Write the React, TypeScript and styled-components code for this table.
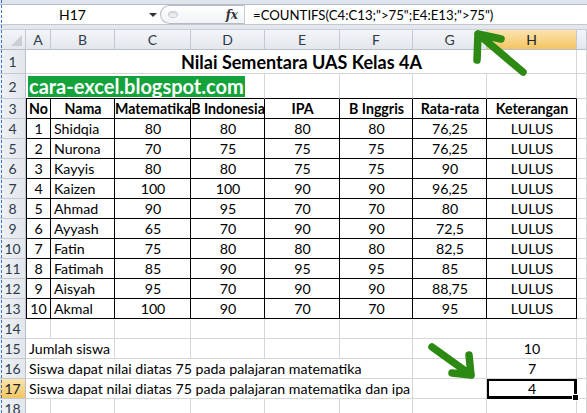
import React from 'react';
import styled, { createGlobalStyle, css } from 'styled-components';

const GlobalStyle = createGlobalStyle`
  html, body { margin: 0; padding: 0; background: #fff; overflow: hidden; }
  body { font-family: Lato, "Liberation Sans", sans-serif; color: #000; }
  * { box-sizing: border-box; }
`;

const Frame = styled.div`
  position: relative;
  width: 587px;
  height: 413px;
  overflow: hidden;
  background: #fff;
  &::before {
    content: '';
    position: absolute;
    left: 1px;
    top: 0;
    bottom: 0;
    border-left: 1px dashed #3d74d0;
    z-index: 6;
  }
`;

const TopStrip = styled.div`
  height: 4px;
  background: #dfe5ed;
`;

const FormulaBar = styled.div`
  display: flex;
  height: 21px;
  background: #fff;
  border-top: 1px solid #b7bec8;
  border-bottom: 1px solid #c3c9d1;
`;

const NameBox = styled.div`
  width: 160px;
  display: flex;
  align-items: center;
`;

const NameText = styled.div`
  flex: 1;
  text-align: center;
  font-size: 14px;
`;

const Caret = styled.div`
  width: 15px;
  display: flex;
  justify-content: center;
  &::after {
    content: '';
    border-left: 4px solid transparent;
    border-right: 4px solid transparent;
    border-top: 4px solid #333;
  }
`;

const FxArea = styled.div`
  width: 85px;
  height: 100%;
  display: flex;
  align-items: center;
  justify-content: space-between;
  padding: 0 6px 0 7px;
  border: 1px solid #b4bbc5;
  border-right-color: #c6ccd4;
  border-radius: 10px 0 0 10px;
  background: linear-gradient(#ffffff, #f1f3f6);
`;

const Dimple = styled.div`
  width: 10px;
  height: 7px;
  border-radius: 50%;
  background: linear-gradient(#d8dce2, #f5f6f8);
  border: 1px solid #c5cad1;
`;

const Fx = styled.span`
  font-family: "DejaVu Serif", "Liberation Serif", serif;
  font-style: italic;
  font-weight: bold;
  font-size: 12px;
  color: #333;
`;

const FormulaText = styled.div`
  flex: 1;
  padding-left: 8px;
  display: flex;
  align-items: center;
  font-size: 13.2px;
  white-space: nowrap;
`;

const GapStrip = styled.div`
  height: 5px;
  background: #e4e8ed;
  border-bottom: 1px solid #c9ced5;
`;

const Sheet = styled.div`
  display: grid;
  grid-template-columns: 26px 25px 64px 76px 74px 75px 73px 74px 90px 1fr;
  grid-template-rows: 20px 24px 25px repeat(16, 20px);
`;

const headActive = css`
  background: linear-gradient(#fbe4b0, #f3c562);
  color: #222;
`;

const ColHead = styled.div<{ $active?: boolean }>`
  display: flex;
  align-items: center;
  justify-content: center;
  font-size: 14px;
  color: #2f3b4a;
  background: linear-gradient(#f3f5f8, #e3e7ec);
  border-right: 1px solid #c4c9d0;
  border-bottom: 1px solid #b8bfc8;
  ${(p) => p.$active && headActive}
`;

const Corner = styled(ColHead)`
  position: relative;
  &::after {
    content: '';
    position: absolute;
    right: 3px;
    bottom: 3px;
    border-left: 11px solid transparent;
    border-bottom: 11px solid #c9ced5;
  }
`;

const RowHead = styled.div<{ $active?: boolean }>`
  display: flex;
  align-items: center;
  justify-content: center;
  font-size: 14px;
  color: #2f3b4a;
  background: linear-gradient(90deg, #eef1f5, #e3e7ec);
  border-right: 1px solid #b8bfc8;
  border-bottom: 1px solid #c4c9d0;
  ${(p) => p.$active && headActive}
`;

type CellProps = {
  $span?: number;
  $align?: 'left' | 'center';
  $bold?: boolean;
  $box?: boolean;
  $boxLeft?: boolean;
  $under?: boolean;
  $selected?: boolean;
  $overflow?: boolean;
};

const Cell = styled.div<CellProps>`
  position: relative;
  grid-column: span ${(p) => p.$span ?? 1};
  display: flex;
  align-items: center;
  justify-content: ${(p) => (p.$align === 'left' ? 'flex-start' : 'center')};
  padding: 0 2px 0 3px;
  font-size: 14.2px;
  font-weight: ${(p) => (p.$bold ? 700 : 400)};
  white-space: nowrap;
  overflow: ${(p) => (p.$overflow ? 'visible' : 'hidden')};
  border-right: 1px solid ${(p) => (p.$box ? '#000' : '#d6d6d6')};
  border-bottom: 1px solid ${(p) => (p.$box || p.$under ? '#000' : '#d6d6d6')};
  ${(p) => p.$boxLeft && css`box-shadow: inset 1px 0 0 #000;`}
  ${(p) =>
    p.$selected &&
    css`
      overflow: visible;
      box-shadow: inset 0 0 0 2px #000;
      border-right-color: #000;
      border-bottom-color: #000;
      &::after {
        content: '';
        position: absolute;
        right: -3px;
        bottom: -3px;
        width: 5px;
        height: 5px;
        background: #000;
        border: 1px solid #fff;
        z-index: 3;
      }
    `}
`;

const Title = styled.span`
  font-size: 18px;
  font-weight: 700;
`;

const Brand = styled.span`
  background: #13a33a;
  color: #fff;
  font-weight: 700;
  font-size: 20px;
  line-height: 21px;
  padding: 0 1px;
  margin-left: -1px;
`;

const Arrows = styled.svg`
  position: absolute;
  left: 0;
  top: 0;
  pointer-events: none;
  z-index: 5;
`;

const COLS = ['A', 'B', 'C', 'D', 'E', 'F', 'G', 'H', ''];
const HEADERS = ['No', 'Nama', 'Matematika', 'B Indonesia', 'IPA', 'B Inggris', 'Rata-rata', 'Keterangan'];
const DATA: (string | number)[][] = [
  [1, 'Shidqia', 80, 80, 80, 80, '76,25'],
  [2, 'Nurona', 70, 75, 75, 75, '76,25'],
  [3, 'Kayyis', 80, 80, 75, 75, '90'],
  [4, 'Kaizen', 100, 100, 90, 90, '96,25'],
  [5, 'Ahmad', 90, 95, 70, 70, '80'],
  [6, 'Ayyash', 65, 70, 90, 90, '72,5'],
  [7, 'Fatin', 75, 80, 80, 80, '82,5'],
  [8, 'Fatimah', 85, 90, 95, 95, '85'],
  [9, 'Aisyah', 95, 70, 90, 90, '88,75'],
  [10, 'Akmal', 100, 90, 70, 70, '95'],
];

const Blank = ({ n }: { n: number }) => (
  <>
    {Array.from({ length: n }).map((_, i) => (
      <Cell key={i} />
    ))}
  </>
);

export default function App() {
  return (
    <Frame>
      <GlobalStyle />
      <TopStrip />
      <FormulaBar>
        <NameBox>
          <NameText>H17</NameText>
          <Caret />
        </NameBox>
        <FxArea>
          <Dimple />
          <Fx>fx</Fx>
        </FxArea>
        <FormulaText>=COUNTIFS(C4:C13;"&gt;75";E4:E13;"&gt;75")</FormulaText>
      </FormulaBar>
      <GapStrip />
      <Sheet>
        <Corner />
        {COLS.map((c, i) => (
          <ColHead key={i} $active={c === 'H'}>
            {c}
          </ColHead>
        ))}

        <RowHead>1</RowHead>
        <Cell $span={8}>
          <Title>Nilai Sementara UAS Kelas 4A</Title>
        </Cell>
        <Cell />

        <RowHead>2</RowHead>
        <Cell $span={4} $align="left" $under $overflow>
          <Brand>cara-excel.blogspot.com</Brand>
        </Cell>
        <Cell $under />
        <Cell $under />
        <Cell $under />
        <Cell $under />
        <Cell />

        <RowHead>3</RowHead>
        {HEADERS.map((h, i) => (
          <Cell key={h} $box $boxLeft={i === 0} $bold>
            {h}
          </Cell>
        ))}
        <Cell />

        {DATA.map((r, ri) => (
          <React.Fragment key={ri}>
            <RowHead>{ri + 4}</RowHead>
            {r.map((v, ci) => (
              <Cell key={ci} $box $boxLeft={ci === 0} $align={ci === 1 ? 'left' : 'center'}>
                {v}
              </Cell>
            ))}
            <Cell $box>LULUS</Cell>
            <Cell />
          </React.Fragment>
        ))}

        <RowHead>14</RowHead>
        <Blank n={9} />

        <RowHead>15</RowHead>
        <Cell $span={2} $align="left">Jumlah siswa</Cell>
        <Blank n={5} />
        <Cell>10</Cell>
        <Cell />

        <RowHead>16</RowHead>
        <Cell $span={6} $align="left">Siswa dapat nilai diatas 75 pada palajaran matematika</Cell>
        <Cell />
        <Cell>7</Cell>
        <Cell />

        <RowHead $active>17</RowHead>
        <Cell $span={6} $align="left" $overflow>Siswa dapat nilai diatas 75 pada palajaran matematika dan ipa</Cell>
        <Cell />
        <Cell $selected>4</Cell>
        <Cell />

        <RowHead>18</RowHead>
        <Blank n={9} />
      </Sheet>
      <Arrows width="587" height="413" viewBox="0 0 587 413">
        <g stroke="#2c8a13" strokeWidth="7.5" strokeLinecap="round" strokeLinejoin="round" fill="none">
          <path d="M523 72 L478 34 M478 34 L501 39 M478 34 L477 60" />
          <path d="M432 347 L471 375 M471 375 L469 355 M471 375 L452 373" />
        </g>
      </Arrows>
    </Frame>
  );
}
